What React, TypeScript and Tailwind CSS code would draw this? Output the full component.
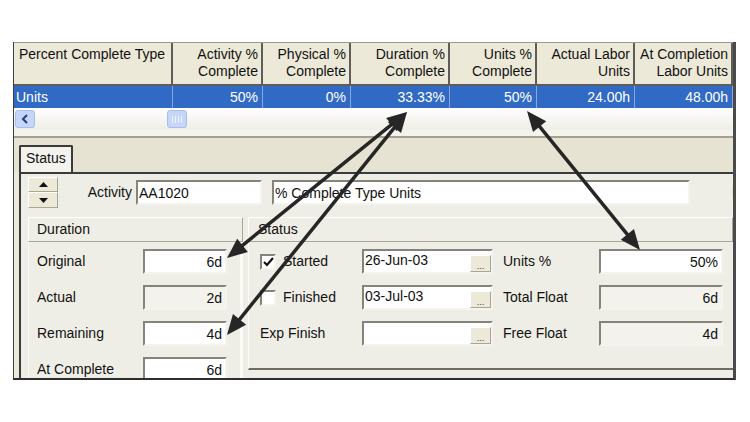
import React from 'react';

const headers = [
  ['Percent Complete Type'],
  ['Activity %', 'Complete'],
  ['Physical %', 'Complete'],
  ['Duration %', 'Complete'],
  ['Units %', 'Complete'],
  ['Actual Labor', 'Units'],
  ['At Completion', 'Labor Units'],
];

const values = ['Units', '50%', '0%', '33.33%', '50%', '24.00h', '48.00h'];

const sunken =
  'border-2 border-t-[#85837a] border-l-[#85837a] border-r-[#f4f3ee] border-b-[#f4f3ee]';

const raised =
  'border border-t-white border-l-white border-r-[#a9a698] border-b-[#a9a698]';

type Pt = [number, number];

// arrowhead triangle pointing at tip, coming from tail
const head = (tail: Pt, tip: Pt, len = 20, wid = 17) => {
  const dx = tip[0] - tail[0];
  const dy = tip[1] - tail[1];
  const d = Math.hypot(dx, dy);
  const ux = dx / d;
  const uy = dy / d;
  const bx = tip[0] - ux * len;
  const by = tip[1] - uy * len;
  const nx = -uy * (wid / 2);
  const ny = ux * (wid / 2);
  return `${tip[0]},${tip[1]} ${bx + nx},${by + ny} ${bx - nx},${by - ny}`;
};

const Arrow = ({ a, b }: { a: Pt; b: Pt }) => {
  const dx = b[0] - a[0];
  const dy = b[1] - a[1];
  const d = Math.hypot(dx, dy);
  const s: Pt = [a[0] + (dx / d) * 14, a[1] + (dy / d) * 14];
  const e: Pt = [b[0] - (dx / d) * 14, b[1] - (dy / d) * 14];
  return (
    <g fill="#262626" stroke="#262626">
      <line x1={s[0]} y1={s[1]} x2={e[0]} y2={e[1]} strokeWidth={3.5} />
      <polygon points={head(b, a)} strokeWidth={0} />
      <polygon points={head(a, b)} strokeWidth={0} />
    </g>
  );
};

const Field = ({
  value,
  w,
  ro,
  right,
}: {
  value?: string;
  w: string;
  ro?: boolean;
  right?: boolean;
}) => (
  <div
    className={`${sunken} ${w} shrink-0 h-[25px] ${ro ? 'bg-[#f3f2ec]' : 'bg-white'} flex items-center ${
      right ? 'justify-end pr-[3px]' : 'pl-[1px]'
    } leading-none`}
  >
    {value}
  </div>
);

const DateField = ({ value }: { value?: string }) => (
  <div className={`${sunken} shrink-0 w-[131px] h-[25px] bg-white flex items-start justify-between`}>
    <span className="pl-[1px] pt-[2px] leading-none">{value}</span>
    <div className={`${raised} self-end w-[21px] h-[17px] bg-[#ece9d8] flex items-end justify-center text-[9px] leading-[10px] text-[#333]`}>
      ...
    </div>
  </div>
);

const Check = ({ checked }: { checked?: boolean }) => (
  <div className={`${sunken} shrink-0 w-[16px] h-[16px] bg-white flex items-center justify-center`}>
    {checked && (
      <svg width="11" height="10" viewBox="0 0 11 10">
        <path d="M1 5 L4 8 L10 1" fill="none" stroke="#111" strokeWidth="2.2" />
      </svg>
    )}
  </div>
);

export default function App() {
  return (
    <div className="relative w-[750px] h-[422px] bg-white overflow-hidden font-['Liberation_Sans',Arial,sans-serif] text-[14px] text-[#111]">
      <div className="pt-[42px] pl-[13px]">
        <div className="w-[723px] h-[338px] border-l border-[#3c3c3c] border-r-[3px] border-r-[#4a4a4a] border-b-2 border-b-[#2e2e2e] bg-[#ece9d8] flex flex-col overflow-hidden">
          {/* grid header */}
          <div className="grid grid-cols-[159px_90px_88px_99px_87px_98px_98px] h-[44px] shrink-0 border-t border-[#9c9a90] border-b-2 border-b-[#5e5d57] bg-[#ece9d8]">
            {headers.map((h, i) => (
              <div
                key={i}
                className={`border-r-2 border-[#5e5d57] px-[3px] pt-[3px] leading-[17px] ${
                  i === 0 ? 'text-left pl-[5px]' : 'text-right'
                }`}
              >
                {h.map((l) => (
                  <div key={l}>{l}</div>
                ))}
              </div>
            ))}
          </div>

          {/* selected row */}
          <div className="grid grid-cols-[159px_90px_88px_99px_87px_98px_98px] h-[22px] shrink-0 bg-[#316ac5] text-white">
            {values.map((v, i) => (
              <div
                key={i}
                className={`border-r border-[#8aa6de] leading-[22px] ${
                  i === 0 ? 'pl-[2px]' : 'text-right pr-[4px]'
                }`}
              >
                {v}
              </div>
            ))}
          </div>

          {/* horizontal scrollbar */}
          <div className="h-[22px] shrink-0 bg-gradient-to-b from-white to-[#eeede6] flex items-center pl-[1px]">
            <div className="w-[20px] h-[18px] rounded-[3px] bg-[#c6d6fa] border border-[#a9bdea] flex items-center justify-center">
              <svg width="8" height="10" viewBox="0 0 8 10">
                <path d="M6 1 L2 5 L6 9" fill="none" stroke="#233e7a" strokeWidth="2" />
              </svg>
            </div>
            <div className="ml-[132px] w-[20px] h-[18px] rounded-[3px] bg-[#c6d6fa] border border-[#a9bdea] flex items-center justify-center gap-[2px]">
              <span className="w-[1px] h-[7px] bg-[#eef3ff]" />
              <span className="w-[1px] h-[7px] bg-[#eef3ff]" />
              <span className="w-[1px] h-[7px] bg-[#eef3ff]" />
              <span className="w-[1px] h-[7px] bg-[#eef3ff]" />
            </div>
          </div>

          {/* band with tab */}
          <div className="h-[6px] shrink-0 bg-[#f4f3ee]" />
          <div className="h-[36px] shrink-0 border-t-2 border-[#a3a092] bg-[#e6e3d3] flex items-end pl-[5px]">
            <div className="w-[54px] h-[27px] border-2 border-b-0 border-[#3b3b3b] rounded-t-[2px] bg-[#f3f2ec] pl-[5px] pt-[4px] leading-none">
              Status
            </div>
          </div>

          {/* tab page */}
          <div className="ml-[5px] flex-1 border-t-2 border-l-2 border-[#3b3b3b] bg-[#efeee6] overflow-hidden">
            <div className="flex items-center h-[31px] mt-[3px] pl-[7px]">
              <div className="w-[30px] h-[31px] shrink-0 flex flex-col">
                <div className={`${raised} h-[15px] bg-[#ece9d8] flex items-center justify-center`}>
                  <svg width="9" height="5" viewBox="0 0 9 5">
                    <path d="M0 5 L4.5 0 L9 5 Z" fill="#111" />
                  </svg>
                </div>
                <div className={`${raised} h-[16px] bg-[#ece9d8] flex items-center justify-center`}>
                  <svg width="9" height="5" viewBox="0 0 9 5">
                    <path d="M0 0 L4.5 5 L9 0 Z" fill="#111" />
                  </svg>
                </div>
              </div>
              <div className="w-[74px] shrink-0 text-right">Activity</div>
              <div className="ml-[4px] shrink-0">
                <Field value="AA1020" w="w-[126px]" />
              </div>
              <div className="ml-[10px] shrink-0">
                <Field value="% Complete Type Units" w="w-[418px]" />
              </div>
              <div className="ml-[42px] shrink-0">F</div>
            </div>

            <div className="flex mt-[9px] pl-[7px] gap-[5px]">
              {/* Duration group */}
              <div className="w-[215px] shrink-0 flex flex-col">
                <div className={`${raised} h-[25px] bg-[#efeee6] flex items-center pl-[8px]`}>
                  Duration
                </div>
                <div className="border-l border-[#f8f8f4] border-r-[3px] border-r-[#fbfbf8] pl-[8px] pt-[7px] flex flex-col gap-[11px] h-[140px]">
                  {[
                    ['Original', '6d', false],
                    ['Actual', '2d', true],
                    ['Remaining', '4d', false],
                    ['At Complete', '6d', false],
                  ].map(([l, v, ro]) => (
                    <div key={l as string} className="flex items-center h-[25px]">
                      <div className="w-[106px] shrink-0">{l}</div>
                      <Field value={v as string} w="w-[84px]" ro={ro as boolean} right />
                    </div>
                  ))}
                </div>
              </div>

              {/* Status group */}
              <div className="flex-1 flex flex-col">
                <div className={`${raised} h-[25px] bg-[#efeee6] flex items-center pl-[9px]`}>
                  Status
                </div>
                <div className="h-[128px] border-l border-[#fbfbf8] border-b-2 border-b-[#6f6d63] pl-[11px] pt-[7px] flex flex-col gap-[11px]">
                  <div className="flex items-center h-[25px]">
                    <div className="w-[102px] shrink-0 flex items-center gap-[7px]">
                      <Check checked />
                      <span>Started</span>
                    </div>
                    <DateField value="26-Jun-03" />
                    <div className="w-[106px] shrink-0 pl-[10px]">Units %</div>
                    <Field value="50%" w="w-[124px]" right />
                  </div>
                  <div className="flex items-center h-[25px]">
                    <div className="w-[102px] shrink-0 flex items-center gap-[7px]">
                      <Check />
                      <span>Finished</span>
                    </div>
                    <DateField value="03-Jul-03" />
                    <div className="w-[106px] shrink-0 pl-[10px]">Total Float</div>
                    <Field value="6d" w="w-[124px]" ro right />
                  </div>
                  <div className="flex items-center h-[25px]">
                    <div className="w-[102px] shrink-0">Exp Finish</div>
                    <DateField />
                    <div className="w-[106px] shrink-0 pl-[10px]">Free Float</div>
                    <Field value="4d" w="w-[124px]" ro right />
                  </div>
                </div>
              </div>
            </div>
          </div>
        </div>
      </div>

      {/* annotation arrows */}
      <svg className="absolute inset-0 pointer-events-none" width="750" height="422">
        <Arrow a={[407, 112]} b={[227, 258]} />
        <Arrow a={[407, 112]} b={[227, 335]} />
        <Arrow a={[527, 111]} b={[640, 250]} />
      </svg>
    </div>
  );
}
